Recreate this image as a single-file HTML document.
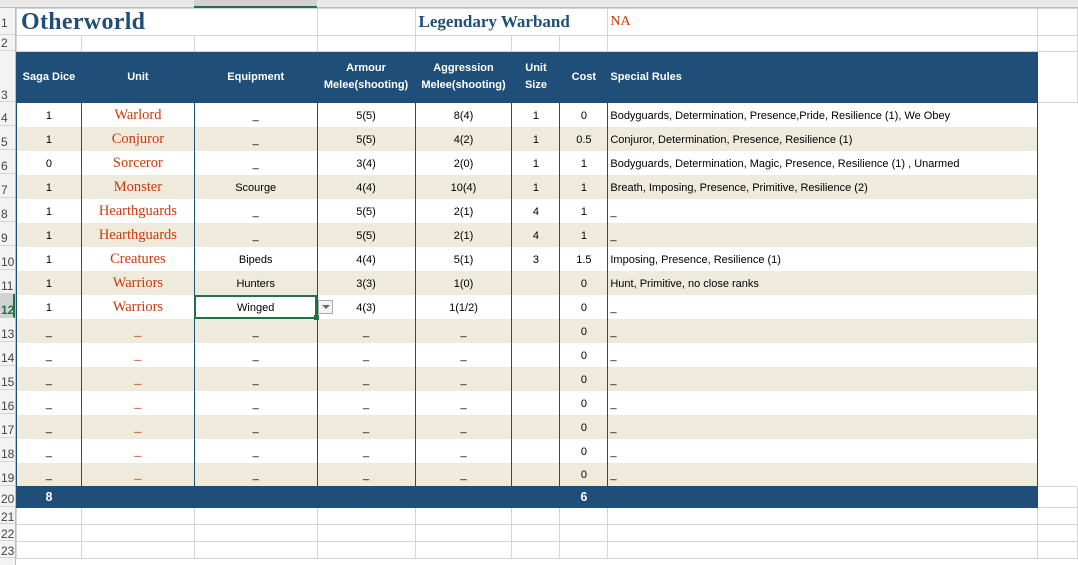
<!DOCTYPE html>
<html><head><meta charset="utf-8"><style>
*{margin:0;padding:0;box-sizing:border-box}
body{width:1078px;height:565px;overflow:hidden;background:#fff;font-family:"Liberation Sans",sans-serif;font-size:11px;color:#000;position:relative}
.colhdr{position:absolute;left:0;top:0;width:1078px;height:8px;background:#e9e9e9;border-bottom:1px solid #bdbdbd}
.rowhdr{position:absolute;left:0;top:8px;width:16px;height:557px;background:#f3f3f3;border-right:1px solid #bdbdbd}
.rn{position:absolute;left:0;width:15px;font-size:12px;color:#444;text-align:left;padding-left:1px;border-bottom:1px solid #d4d4d4}
table{position:absolute;left:16px;top:8px;border-collapse:collapse;table-layout:fixed}
td{border:1px solid #d4d4d4;text-align:center;vertical-align:bottom;padding:0 2px 5px;white-space:nowrap;overflow:hidden}
tr.h td{background:#1f4e78;color:#fff;font-weight:bold;border-color:#1f4e78;vertical-align:middle;line-height:17px;padding:0}
tr.d td{border-left:1px solid #1f4e78;border-right:1px solid #1f4e78;border-top:none;border-bottom:none;height:24px}
tr.d td.last{border-left:1px solid #1f4e78;border-right:1px solid #fff}
tr.b td{background:#eeeadc}
tr.b td.last{background:#fff}
td.u{font-family:"Liberation Serif",serif;font-size:14.5px;color:#d0380c;padding-bottom:3px}
td.r{text-align:left;padding-left:2px}
tr.t td{background:#1f4e78;color:#fff;font-weight:bold;font-size:12.5px;border-color:#1f4e78;height:21px;vertical-align:middle;padding:0}
</style></head><body>
<div class="colhdr"></div>
<div style="position:absolute;left:194px;top:0;width:123px;height:8px;background:#d2d2d2;border-bottom:2px solid #217346"></div>
<div class="rowhdr"></div>
<div class="rn" style="top:8px;height:27px;line-height:30px">1</div>
<div class="rn" style="top:35px;height:16px;line-height:16px">2</div>
<div class="rn" style="top:51px;height:51px;line-height:88px">3</div>
<div class="rn" style="top:102px;height:24px;line-height:32px">4</div>
<div class="rn" style="top:126px;height:24px;line-height:32px">5</div>
<div class="rn" style="top:150px;height:24px;line-height:32px">6</div>
<div class="rn" style="top:174px;height:24px;line-height:32px">7</div>
<div class="rn" style="top:198px;height:24px;line-height:32px">8</div>
<div class="rn" style="top:222px;height:24px;line-height:32px">9</div>
<div class="rn" style="top:246px;height:24px;line-height:32px">10</div>
<div class="rn" style="top:270px;height:24px;line-height:32px">11</div>
<div class="rn" style="top:294px;height:24px;line-height:32px;background:#d2d2d2;color:#217346;font-weight:bold;border-right:2px solid #217346">12</div>
<div class="rn" style="top:318px;height:24px;line-height:32px">13</div>
<div class="rn" style="top:342px;height:24px;line-height:32px">14</div>
<div class="rn" style="top:366px;height:24px;line-height:32px">15</div>
<div class="rn" style="top:390px;height:24px;line-height:32px">16</div>
<div class="rn" style="top:414px;height:24px;line-height:32px">17</div>
<div class="rn" style="top:438px;height:24px;line-height:32px">18</div>
<div class="rn" style="top:462px;height:24px;line-height:32px">19</div>
<div class="rn" style="top:486px;height:21px;line-height:26px">20</div>
<div class="rn" style="top:507px;height:17px;line-height:20px">21</div>
<div class="rn" style="top:524px;height:17px;line-height:20px">22</div>
<div class="rn" style="top:541px;height:17px;line-height:20px">23</div>
<table>
<colgroup><col style="width:65px"><col style="width:113px"><col style="width:123px"><col style="width:98px"><col style="width:97px"><col style="width:48px"><col style="width:48px"><col style="width:430px"><col style="width:40px"></colgroup>
<tr style="height:27px"><td colspan="3" style="text-align:left;font-family:'Liberation Serif',serif;font-weight:bold;font-size:24px;line-height:20px;height:27px;letter-spacing:0.3px;color:#1f4e78;padding:0 0 0 4px;vertical-align:middle;border-right:none">Otherworld</td><td></td><td colspan="3" style="text-align:left;font-family:'Liberation Serif',serif;font-weight:bold;font-size:17px;line-height:20px;color:#1f4e78;padding:0 0 0 3px;vertical-align:middle">Legendary Warband</td><td style="text-align:left;font-family:'Liberation Serif',serif;font-size:14px;line-height:20px;color:#d0380c;padding:0 0 0 2px;vertical-align:middle">NA</td><td></td></tr>
<tr style="height:16px"><td></td><td></td><td></td><td></td><td></td><td></td><td></td><td></td><td></td></tr>
<tr class="h" style="height:51px"><td>Saga Dice</td><td>Unit</td><td>Equipment</td><td>Armour<br>Melee(shooting)</td><td>Aggression<br>Melee(shooting)</td><td>Unit<br>Size</td><td>Cost</td><td style="text-align:left;padding-left:2px">Special Rules</td><td style="background:#fff;border-color:#d4d4d4"></td></tr>
<tr class="d"><td>1</td><td class="u">Warlord</td><td>_</td><td>5(5)</td><td>8(4)</td><td>1</td><td>0</td><td class="r">Bodyguards, Determination, Presence,Pride, Resilience (1), We Obey</td><td class="last"></td></tr>
<tr class="d b"><td>1</td><td class="u">Conjuror</td><td>_</td><td>5(5)</td><td>4(2)</td><td>1</td><td>0.5</td><td class="r">Conjuror, Determination, Presence, Resilience (1)</td><td class="last"></td></tr>
<tr class="d"><td>0</td><td class="u">Sorceror</td><td>_</td><td>3(4)</td><td>2(0)</td><td>1</td><td>1</td><td class="r">Bodyguards, Determination, Magic, Presence, Resilience (1) , Unarmed</td><td class="last"></td></tr>
<tr class="d b"><td>1</td><td class="u">Monster</td><td>Scourge</td><td>4(4)</td><td>10(4)</td><td>1</td><td>1</td><td class="r">Breath, Imposing, Presence, Primitive, Resilience (2)</td><td class="last"></td></tr>
<tr class="d"><td>1</td><td class="u">Hearthguards</td><td>_</td><td>5(5)</td><td>2(1)</td><td>4</td><td>1</td><td class="r">_</td><td class="last"></td></tr>
<tr class="d b"><td>1</td><td class="u">Hearthguards</td><td>_</td><td>5(5)</td><td>2(1)</td><td>4</td><td>1</td><td class="r">_</td><td class="last"></td></tr>
<tr class="d"><td>1</td><td class="u">Creatures</td><td>Bipeds</td><td>4(4)</td><td>5(1)</td><td>3</td><td>1.5</td><td class="r">Imposing, Presence, Resilience (1)</td><td class="last"></td></tr>
<tr class="d b"><td>1</td><td class="u">Warriors</td><td>Hunters</td><td>3(3)</td><td>1(0)</td><td></td><td>0</td><td class="r">Hunt, Primitive, no close ranks</td><td class="last"></td></tr>
<tr class="d"><td>1</td><td class="u">Warriors</td><td style="outline:2px solid #217346;outline-offset:-2px">Winged</td><td>4(3)</td><td>1(1/2)</td><td></td><td>0</td><td class="r">_</td><td class="last"></td></tr>
<tr class="d b"><td>_</td><td class="u">_</td><td>_</td><td>_</td><td>_</td><td></td><td>0</td><td class="r">_</td><td class="last"></td></tr>
<tr class="d"><td>_</td><td class="u">_</td><td>_</td><td>_</td><td>_</td><td></td><td>0</td><td class="r">_</td><td class="last"></td></tr>
<tr class="d b"><td>_</td><td class="u">_</td><td>_</td><td>_</td><td>_</td><td></td><td>0</td><td class="r">_</td><td class="last"></td></tr>
<tr class="d"><td>_</td><td class="u">_</td><td>_</td><td>_</td><td>_</td><td></td><td>0</td><td class="r">_</td><td class="last"></td></tr>
<tr class="d b"><td>_</td><td class="u">_</td><td>_</td><td>_</td><td>_</td><td></td><td>0</td><td class="r">_</td><td class="last"></td></tr>
<tr class="d"><td>_</td><td class="u">_</td><td>_</td><td>_</td><td>_</td><td></td><td>0</td><td class="r">_</td><td class="last"></td></tr>
<tr class="d b"><td>_</td><td class="u">_</td><td>_</td><td>_</td><td>_</td><td></td><td>0</td><td class="r">_</td><td class="last"></td></tr>
<tr class="t"><td>8</td><td></td><td></td><td></td><td></td><td></td><td>6</td><td></td><td style="background:#fff;border-color:#d4d4d4"></td></tr>
<tr style="height:17px"><td></td><td></td><td></td><td></td><td></td><td></td><td></td><td></td><td></td></tr>
<tr style="height:17px"><td></td><td></td><td></td><td></td><td></td><td></td><td></td><td></td><td></td></tr>
<tr style="height:17px"><td></td><td></td><td></td><td></td><td></td><td></td><td></td><td></td><td></td></tr>
</table>
<div style="position:absolute;left:318px;top:300px;width:15px;height:14px;background:#f3f3f3;border:1px solid #aaa"><div style="position:absolute;left:3px;top:4px;width:0;height:0;border-left:4px solid transparent;border-right:4px solid transparent;border-top:4px solid #666"></div></div>
<div style="position:absolute;left:314px;top:315px;width:5px;height:5px;background:#217346"></div>
</body></html>
